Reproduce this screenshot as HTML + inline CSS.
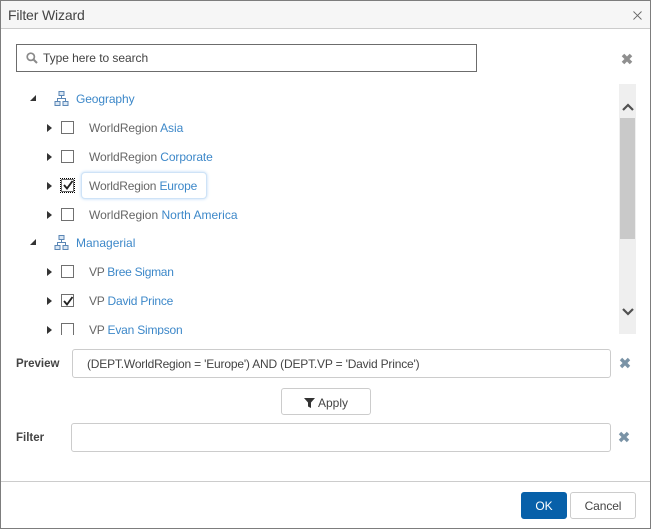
<!DOCTYPE html>
<html>
<head>
<meta charset="utf-8">
<style>
html,body{margin:0;padding:0;background:#fff}
body{width:651px;height:529px;overflow:hidden;position:relative;font-family:"Liberation Sans",sans-serif;font-size:12px;color:#666}
.a{position:absolute;white-space:nowrap}
.frame{position:absolute;left:0;top:0;width:649px;height:527px;border:1px solid #7d7d7d}
.head{position:absolute;left:1px;top:1px;width:649px;height:27px;background:#f6f6f6;border-bottom:1px solid #ccc}
.t{height:16px;line-height:16px}
.b{color:#3d88c9}
.cb{position:absolute;left:61px;width:11px;height:11px;border:1px solid #707070;background:#fff}
.ti{position:absolute;left:47px;width:0;height:0;border-top:4px solid transparent;border-bottom:4px solid transparent;border-left:5px solid #333}
.td{position:absolute;left:30px;width:0;height:0;border-left:6px solid transparent;border-bottom:6px solid #333}
.in{position:absolute;box-sizing:border-box;border:1px solid #ccc;border-radius:3px;background:#fff}
.btn{position:absolute;box-sizing:border-box;border:1px solid #ccc;border-radius:3px;background:#fff;color:#333;text-align:center}
svg{position:absolute;overflow:visible}
</style>
</head>
<body>
<div class="frame"></div>
<div class="head"></div>
<div class="a" style="left:8px;top:7px;font-size:14px;line-height:16px;color:#444;letter-spacing:-.15px">Filter Wizard</div>
<svg style="left:633px;top:11px" width="9" height="9"><path d="M0.5 0.5L8.5 8.5M8.5 0.5L0.5 8.5" stroke="#666" stroke-width="0.9" fill="none"/></svg>

<div style="position:absolute;left:16px;top:44px;width:459px;height:26px;border:1px solid #6c6c6c;background:#fff"></div>
<svg style="left:26px;top:52px" width="12" height="12"><circle cx="4.8" cy="4.8" r="3.6" fill="none" stroke="#8a8a8a" stroke-width="1.7"/><path d="M7.5 7.5L11 11" stroke="#8a8a8a" stroke-width="2"/></svg>
<div class="a t" style="left:43px;top:50px;color:#444;letter-spacing:-.05px">Type here to search</div>
<svg style="left:621px;top:53px" width="12" height="12"><path d="M2 2L10 10M10 2L2 10" stroke="#8f8f8f" stroke-width="3.6" fill="none"/></svg>

<div style="position:absolute;left:619px;top:84px;width:17px;height:250px;background:#efefef"></div>
<div style="position:absolute;left:620px;top:118px;width:15px;height:121px;background:#c9c9c9"></div>
<svg style="left:622px;top:103px" width="12" height="8"><path d="M1 7L6 2L11 7" fill="none" stroke="#505050" stroke-width="2.2"/></svg>
<svg style="left:622px;top:308px" width="12" height="8"><path d="M1 1L6 6L11 1" fill="none" stroke="#505050" stroke-width="2.2"/></svg>

<div style="position:absolute;left:0;top:84px;width:618px;height:251px;overflow:hidden">
  <div class="td" style="top:11px"></div>
  <svg style="left:54px;top:7px" width="15" height="15"><path d="M5 .5h5v4H5zM1 10.5h5v4H1zM9 10.5h5v4H9z" fill="#dbe7f3" stroke="#5a86b5"/><path d="M7.5 4.5v3M3.5 10.5v-3h8v3" fill="none" stroke="#5a86b5"/></svg>
  <div class="a t b" style="left:76px;top:7px;letter-spacing:-.1px">Geography</div>

  <div class="ti" style="top:40px"></div><div class="cb" style="top:37px"></div>
  <div class="a t" style="left:89px;top:36px;letter-spacing:-.06px">WorldRegion <span class="b">Asia</span></div>

  <div class="ti" style="top:69px"></div><div class="cb" style="top:66px"></div>
  <div class="a t" style="left:89px;top:65px;letter-spacing:-.1px">WorldRegion <span class="b">Corporate</span></div>

  <div class="ti" style="top:98px"></div><div class="cb" style="top:95px"></div>
  <div style="position:absolute;left:60px;top:94px;width:13px;height:13px;border:1px dotted #000"></div>
  <svg style="left:63px;top:96px" width="11" height="11"><path d="M1 5L4 8.5L9.5 1" fill="none" stroke="#222" stroke-width="1.9"/></svg>
  <div style="position:absolute;left:81px;top:88px;width:124px;height:25px;border:1px solid #cfe3f7;border-radius:4px;background:#fff;box-shadow:0 0 3px #bcd9f5"></div>
  <div class="a t" style="left:89px;top:94px;letter-spacing:-.17px">WorldRegion <span class="b">Europe</span></div>

  <div class="ti" style="top:127px"></div><div class="cb" style="top:124px"></div>
  <div class="a t" style="left:89px;top:123px">WorldRegion <span class="b">North America</span></div>

  <div class="td" style="top:155px"></div>
  <svg style="left:54px;top:151px" width="15" height="15"><path d="M5 .5h5v4H5zM1 10.5h5v4H1zM9 10.5h5v4H9z" fill="#dbe7f3" stroke="#5a86b5"/><path d="M7.5 4.5v3M3.5 10.5v-3h8v3" fill="none" stroke="#5a86b5"/></svg>
  <div class="a t b" style="left:76px;top:151px">Managerial</div>

  <div class="ti" style="top:184px"></div><div class="cb" style="top:181px"></div>
  <div class="a t" style="left:89px;top:180px;letter-spacing:-.28px">VP <span class="b">Bree Sigman</span></div>

  <div class="ti" style="top:213px"></div><div class="cb" style="top:210px"></div>
  <svg style="left:63px;top:212px" width="11" height="11"><path d="M1 5L4 8.5L9.5 1" fill="none" stroke="#222" stroke-width="1.9"/></svg>
  <div class="a t" style="left:89px;top:209px;letter-spacing:-.2px">VP <span class="b">David Prince</span></div>

  <div class="ti" style="top:242px"></div><div class="cb" style="top:239px"></div>
  <div class="a t" style="left:89px;top:238px;letter-spacing:-.2px">VP <span class="b">Evan Simpson</span></div>
</div>

<div class="a t" style="left:16px;top:356px;font-weight:bold;font-size:11.5px;color:#444">Preview</div>
<div class="in" style="left:72px;top:349px;width:539px;height:29px"></div>
<div class="a t" style="left:87px;top:356px;color:#444;letter-spacing:-.185px">(DEPT.WorldRegion = 'Europe') AND (DEPT.VP = 'David Prince')</div>
<svg style="left:619px;top:357px" width="12" height="12"><path d="M2 2L10 10M10 2L2 10" stroke="#7a93a6" stroke-width="3.4" fill="none"/></svg>

<div class="btn" style="left:281px;top:388px;width:90px;height:27px"></div>
<svg style="left:304px;top:398px" width="11" height="10"><path d="M0 0H11L7 4.5V10L4 8.5V4.5Z" fill="#333"/></svg>
<div class="a t" style="left:318px;top:395px;color:#444">Apply</div>

<div class="a t" style="left:16px;top:430px;font-weight:bold;font-size:11.5px;color:#444">Filter</div>
<div class="in" style="left:71px;top:423px;width:540px;height:29px"></div>
<svg style="left:618px;top:431px" width="12" height="12"><path d="M2 2L10 10M10 2L2 10" stroke="#7a93a6" stroke-width="3.4" fill="none"/></svg>

<div style="position:absolute;left:1px;top:481px;width:649px;height:1px;background:#ccc"></div>
<div class="btn" style="left:521px;top:492px;width:46px;height:27px;background:#0760a9;border-color:#0760a9;color:#fff;line-height:26px">OK</div>
<div class="btn" style="left:570px;top:492px;width:66px;height:27px;line-height:26px;color:#444;letter-spacing:-.1px">Cancel</div>
</body>
</html>
